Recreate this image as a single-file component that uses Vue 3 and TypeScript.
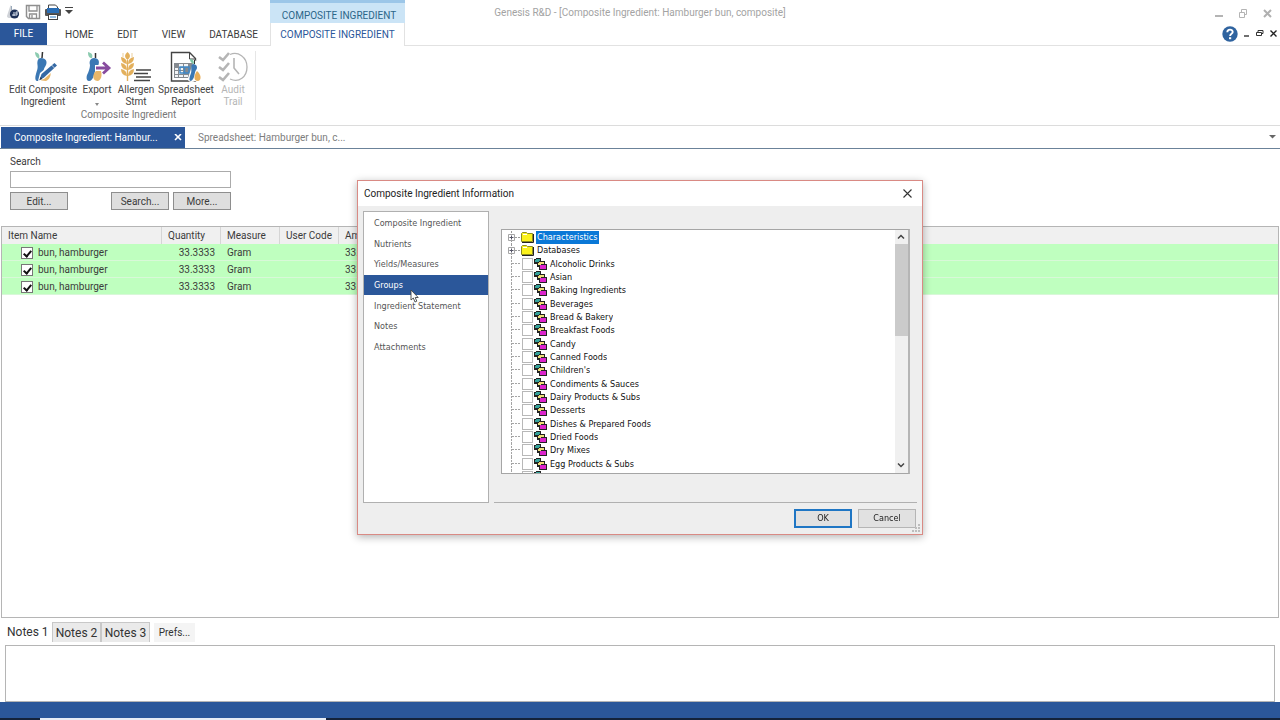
<script setup lang="ts">
import { ref } from 'vue'

interface Row { name: string; quantity: string; measure: string; amount: string; on: boolean }
interface Group { name: string; on: boolean }

const menus: string[] = ['HOME', 'EDIT', 'VIEW', 'DATABASE']
const rows = ref<Row[]>([1, 2, 3].map(() => ({
  name: 'bun, hamburger', quantity: '33.3333', measure: 'Gram', amount: '33.3333', on: true,
})))
const sections: string[] = ['Composite Ingredient', 'Nutrients', 'Yields/Measures', 'Groups', 'Ingredient Statement', 'Notes', 'Attachments']
const section = ref('Groups')
const folders: string[] = ['Characteristics', 'Databases']
const folder = ref('Characteristics')
const groups = ref<Group[]>([
  'Alcoholic Drinks', 'Asian', 'Baking Ingredients', 'Beverages', 'Bread & Bakery', 'Breakfast Foods',
  'Candy', 'Canned Foods', "Children's", 'Condiments & Sauces', 'Dairy Products & Subs', 'Desserts',
  'Dishes & Prepared Foods', 'Dried Foods', 'Dry Mixes', 'Egg Products & Subs', '',
].map((name) => ({ name, on: false })))
const search = ref('')
const notes = ref('')
</script>

<template>
  <div class="window">
    <header class="titlebar">
      <div class="title-left">
        <div class="quick">
          <svg width="14" height="16" viewBox="0 0 14 16" aria-hidden="true">
            <path d="M3.500 1 0 12q0 2 3 2h5z" fill="#d0d3d8" />
            <path d="M4.500 2v4" stroke="#9ab" stroke-width="1" />
            <circle cx="7.500" cy="10" r="4.600" fill="#1d3057" />
            <path d="M5 11h3M7 8v4M9 12V8h2M9 10h2" stroke="#dfe6f2" stroke-width="1" fill="none" />
          </svg>
          <button class="bare" aria-label="Save">
            <svg width="16" height="16" viewBox="0 0 16 16">
              <path d="M1.500 1.500h13v13h-11l-2-2z" fill="#fff" stroke="#8f8f8f" stroke-width="1.500" />
              <path d="M4 2v5h8V2" fill="none" stroke="#8f8f8f" stroke-width="1.300" />
              <path d="M4.500 14v-4h7v4M7 11v3" fill="none" stroke="#8f8f8f" stroke-width="1.300" />
            </svg>
          </button>
          <button class="bare" aria-label="Print">
            <svg width="16" height="16" viewBox="0 0 16 16">
              <path d="M3.500 5V1h7l2 2v2" fill="#fff" stroke="#444" />
              <rect x="0" y="5" width="16" height="7" rx="1" fill="#555" />
              <rect x="2" y="4" width="12" height="5" fill="#2a6db4" />
              <rect x="3.500" y="10.500" width="9" height="5" fill="#fff" stroke="#444" />
              <path d="M5 13h6" stroke="#2a7ac4" />
            </svg>
          </button>
          <button class="bare" aria-label="Customize toolbar">
            <svg width="8" height="10" viewBox="0 0 8 10"><path d="M0 .5h8" stroke="#444" /><path d="M0 3h8L4 7z" fill="#444" /></svg>
          </button>
        </div>
        <div class="context">COMPOSITE INGREDIENT</div>
      </div>
      <div class="title">Genesis R&amp;D - [Composite Ingredient: Hamburger bun, composite]</div>
      <div class="winbtns">
        <button class="bare" aria-label="Minimize"><svg width="8" height="10" viewBox="0 0 8 10"><path d="M0 7h8" stroke="#b4b4b4" stroke-width="2" /></svg></button>
        <button class="bare" aria-label="Restore"><svg width="8" height="10" viewBox="0 0 8 10"><path d="M.5 3.500h5v5h-5zM2.500 3V.5h5v5H6" fill="none" stroke="#b4b4b4" /></svg></button>
        <button class="bare" aria-label="Close"><svg width="9" height="10" viewBox="0 0 9 10"><path d="m1 1 7 7M8 1 1 8" stroke="#b0b0b0" stroke-width="2" /></svg></button>
      </div>
    </header>

    <nav class="menubar">
      <button class="file">FILE</button>
      <div class="menus"><button v-for="m in menus" :key="m" class="menu">{{ m }}</button></div>
      <button class="menu current">COMPOSITE INGREDIENT</button>
      <div class="childbtns">
        <button class="bare" aria-label="Help">
          <svg width="16" height="16" viewBox="0 0 16 16"><circle cx="8" cy="8" r="7.700" fill="#2f639f" /><path d="M5.300 6.200C5.300 2.700 10.800 2.800 10.700 6c0 1.700-2.600 1.900-2.600 3.900" fill="none" stroke="#fff" stroke-width="1.900" /><path d="M7 11.200h2.200v2H7z" fill="#fff" /></svg>
        </button>
        <button class="bare" aria-label="Minimize document"><svg width="6" height="8" viewBox="0 0 6 8"><path d="M0 6h5" stroke="#222" stroke-width="1.300" /></svg></button>
        <button class="bare" aria-label="Restore document"><svg width="8" height="8" viewBox="0 0 8 8"><path d="M.5 2.500h5v3h-5zM2 2V.5h5v3H6" fill="none" stroke="#333" /></svg></button>
        <button class="bare" aria-label="Close document"><svg width="7" height="8" viewBox="0 0 7 8"><path d="m.5.5 6 6m0-6-6 6" stroke="#222" stroke-width="1.400" /></svg></button>
      </div>
    </nav>

    <section class="ribbon">
      <div class="group">
        <div class="tools">
          <button class="tool">
            <svg width="32" height="32" viewBox="0 0 32 32">
              <path d="M8 1c4 1 5 3 4 7C9 6 8 4 8 1z" fill="#8ccbb0" /><path d="M15.500 1 15 7" stroke="#333" stroke-width="1.500" />
              <path d="M14 7c5 0 7 4 4.500 8-2 3-2 5-2.500 8-1 5-3 7-6 7-2 0-2-4-1-7 1-4 2-5 1.500-9C10 10 11 7 14 7z" fill="#3b78b4" />
              <path d="M22 17c3 4 2 11-3 13-3 0-6-1-7-2z" fill="#e9b768" />
              <path d="m11 30 2-8 14-11 4.500 4.500L17 28z" fill="#fff" /><path d="m12.500 29 2-6L27.500 12l2.500 2.500L17 26.500z" fill="#3569a4" /><path d="m12.500 29 1-3 2 2z" fill="#26364c" /><path d="m24.500 14 3 3" stroke="#fff" stroke-width=".7" />
            </svg>
            <span>Edit Composite<br>Ingredient</span>
          </button>
          <button class="tool">
            <svg width="32" height="32" viewBox="0 0 32 32">
              <path d="M7 1c4 1 5 3 4 6C8 7 7 5 7 1z" fill="#8ccbb0" /><path d="M14.500 2v5" stroke="#333" stroke-width="1.500" />
              <path d="M13 7c5 0 6 4 4 8-3 3-3 6-4 9-1 4-3 6-5 6-3 0-3-5-1-8 1-3 2-5 2-8-1-3 0-7 4-7z" fill="#3b78b4" />
              <path d="M18 17c4 4 3 12-1 13-5 0-6-5-3-9z" fill="#e9b768" />
              <path d="M14 14h8V9l9 8-9 9v-6h-8z" fill="#fff" /><path d="M15 17h13M22 11.500l6 5.500-6 5.500" fill="none" stroke="#874b9e" stroke-width="2.800" />
            </svg>
            <span>Export</span><i class="caret"></i>
          </button>
          <button class="tool">
            <svg width="32" height="32" viewBox="0 0 32 32">
              <g fill="#e3b05c"><path d="M7.500 1q5 4 0 8-5-4 0-8zM1 6q6 1 6 7-6-1-6-7zm13 0q-6 1-6 7 6-1 6-7zM1 12q6 1 6 7-6-1-6-7zm13 0q-6 1-6 7 6-1 6-7zM1 18q6 1 6 7-6-1-6-7zm13 0q-6 1-6 7 6-1 6-7z" /><path d="M6.800 9h1.400v21H6.800z" /></g>
              <path d="M3 2v4M12 2v4" stroke="#eccf9c" /><path d="M16 19h15M14 22.500h14M16 26h15M14 29.500h16" stroke="#444" stroke-width="1.300" />
            </svg>
            <span>Allergen<br>Stmt</span>
          </button>
          <button class="tool">
            <svg width="32" height="32" viewBox="0 0 32 32">
              <path d="M1.500 1.500h18l6 6V30h-24z" fill="#fff" stroke="#444" stroke-width="1.400" /><path d="M19.500 2v6h6" fill="none" stroke="#444" />
              <path d="M4 12h19v15H4z" fill="#858a90" /><path d="M9 13h4v3H9zm5 0h4v3h-4zM5 17h3v2H5zm4 0h4v2H9zM5 20h3v3H5zm4 0h4v3H9zM5 24h3v2H5zm4 0h4v2H9zm5 0h4v2h-4z" fill="#f2f4f6" />
              <path d="M10 16h9v6h-9zM14.500 16v6" fill="none" stroke="#3e88c8" stroke-width="1.400" />
              <path d="M24 9c5 1 5 5 3 7l5 7c2 6-4 9-7 7-3 2-8 1-7-3l3-9z" fill="#fff" />
              <path d="M20 8q4 0 4 5-4-1-4-5z" fill="#7cc5a5" /><path d="M24.500 9v4" stroke="#333" /><path d="M23 13c4 0 5 4 3 6-2 3-1 9-5 11-3 0-1-5 0-8 1-2-1-8 2-9z" fill="#3b78b4" /><path d="M27 20c4 3 5 9 1 10-5 0-4-6-1-10z" fill="#e9ae58" />
            </svg>
            <span>Spreadsheet<br>Report</span>
          </button>
          <button class="tool" disabled>
            <svg width="32" height="32" viewBox="0 0 32 32" fill="none" stroke="#b5b5b5">
              <path d="M13 3.500C21 0 30 6 30 16c0 10-8 16-17 12" stroke-width="1.300" /><path d="M17 7v10l5 6" stroke-width="1.600" />
              <path d="m2 6 4 3 6-7M2 16l4 3 6-7M2 26l4 3 6-7" stroke-width="2.600" />
            </svg>
            <span>Audit<br>Trail</span>
          </button>
        </div>
        <div class="group-name">Composite Ingredient</div>
      </div>
    </section>

    <div class="doctabs">
      <div class="doctab active"><span>Composite Ingredient: Hambur...</span>
        <button class="bare" aria-label="Close tab"><svg width="8" height="8" viewBox="0 0 8 8"><path d="m1 0 6 6m0-6L1 6" stroke="#fff" stroke-width="1.600" /></svg></button>
      </div>
      <button class="doctab">Spreadsheet: Hamburger bun, c...</button>
      <button class="bare more" aria-label="Tab list"><svg width="7" height="5" viewBox="0 0 7 5"><path d="M0 0h7L3.500 3.500z" fill="#666" /></svg></button>
    </div>

    <main class="work">
      <form class="search" @submit.prevent>
        <label for="search">Search</label>
        <input id="search" v-model="search" type="text">
        <div class="actions"><button type="button">Edit...</button><button type="submit" class="push">Search...</button><button type="button">More...</button></div>
      </form>

      <div class="grid">
        <table>
          <colgroup><col class="c-name"><col class="c-unit"><col class="c-unit"><col class="c-unit"><col></colgroup>
          <thead><tr><th>Item Name</th><th>Quantity</th><th>Measure</th><th>User Code</th><th>Amount</th></tr></thead>
          <tbody>
            <tr v-for="(r, i) in rows" :key="i">
              <td><label class="item"><input v-model="r.on" type="checkbox"><span>{{ r.name }}</span></label></td>
              <td class="num">{{ r.quantity }}</td><td>{{ r.measure }}</td><td></td><td>{{ r.amount }}</td>
            </tr>
          </tbody>
        </table>
      </div>

      <div class="notetabs">
        <button class="note on">Notes 1</button><button class="note">Notes 2</button><button class="note">Notes 3</button><button class="prefs">Prefs...</button>
      </div>
      <textarea v-model="notes" class="notes" aria-label="Notes 1"></textarea>
    </main>
    <footer class="status"><span></span></footer>

    <div class="overlay">
      <div class="dialog" role="dialog" aria-labelledby="dlg-title">
        <div class="dlg-head"><h2 id="dlg-title">Composite Ingredient Information</h2>
          <button class="bare" aria-label="Close dialog"><svg width="9" height="9" viewBox="0 0 9 9"><path d="m.5.5 8 8m0-8-8 8" stroke="#333" stroke-width="1.100" /></svg></button>
        </div>
        <div class="dlg-body">
          <div class="sections">
            <div class="section-list"><button v-for="s in sections" :key="s" :class="{ on: s === section }" @click="section = s">{{ s }}</button></div>
            <svg class="pointer" width="9" height="14" viewBox="0 0 9 14" aria-hidden="true"><path d="M1 1v10l2.300-2 1.700 4 1.800-.8L5.200 8.500h3z" fill="#fff" stroke="#444" stroke-width=".9" /></svg>
          </div>
          <div class="pane">
            <div class="tree">
              <div class="tree-rows">
                <button v-for="f in folders" :key="f" class="node" :class="{ on: f === folder }" @click="folder = f">
                  <svg width="34" height="13" viewBox="0 0 34 13">
                    <path d="M9.500 0v13M13 6.500h6" stroke="#9a9a9a" stroke-dasharray="2 1" />
                    <path d="M6.500 3.500h6v6h-6z" fill="#fff" stroke="#a5a5a5" /><path d="M7.500 6.500h4M9.500 4.500v4" stroke="#556" />
                    <path d="M19.500 10.500v-8l1-1h4l1 1h5v8z" fill="#fbf21c" stroke="#8d8d20" /><path d="M20 11.500h11.500V3" fill="none" stroke="#222" /><path d="M21 3.500h4" stroke="#fff" />
                  </svg><span>{{ f }}</span>
                </button>
                <label v-for="(g, i) in groups" :key="i" class="leaf">
                  <svg width="20" height="14" viewBox="0 0 20 14"><path d="M9.500 0v14M10 6.500h8" stroke="#a5a5a5" stroke-dasharray="2 1" /></svg>
                  <input v-model="g.on" type="checkbox" :aria-label="g.name || 'Group'">
                  <svg width="13" height="12" viewBox="0 0 13 12">
                    <path d="M0 1h2V0h5v6H0z" fill="#222" /><path d="M1 2h1V1h4v3H1z" fill="#35a39b" />
                    <path d="M3 4h2V3h6v6H3z" fill="#222" /><path d="M4 5h1V4h5v3H4z" fill="#eee07a" />
                    <path d="M5 7h2V6h6v6H5z" fill="#222" /><path d="M6 7h6v4H6z" fill="#dc24cc" />
                  </svg>
                  <span>{{ g.name }}</span>
                </label>
              </div>
              <div class="scroll">
                <svg width="14" height="14" viewBox="0 0 14 14"><path d="m3 8.500 3-3 3 3" fill="none" stroke="#444" stroke-width="1.500" /></svg>
                <i class="thumb"></i>
                <svg width="14" height="14" viewBox="0 0 14 14"><path d="m3 4.500 3 3 3-3" fill="none" stroke="#444" stroke-width="1.500" /></svg>
              </div>
            </div>
            <div class="dlg-actions"><button class="ok">OK</button><button>Cancel</button></div>
          </div>
        </div>
        <svg class="grip" width="8" height="8" viewBox="0 0 8 8" aria-hidden="true"><path d="M6 0h2v2H6zM3 3h2v2H3zm3 0h2v2H6zM0 6h2v2H0zm3 0h2v2H3zm3 0h2v2H6z" fill="#bdbdbd" /></svg>
      </div>
    </div>
  </div>
</template>

<style>
html, body { margin: 0; background: #fff; }
</style>

<style scoped>
.window { min-height: 100vh; display: flex; flex-direction: column; font: 10px/12px Roboto, "Open Sans", sans-serif; color: #3b3b3b; background: #fff; overflow: hidden; }
.window * { box-sizing: border-box; }
button, input, textarea { font: inherit; color: inherit; margin: 0; padding: 0; border: 0; background: none; border-radius: 0; }
svg { display: block; flex: none; }
.bare { display: flex; align-items: center; }

.titlebar { display: grid; grid-template-columns: 1fr auto 1fr; height: 23px; }
.title-left { display: flex; }
.quick { width: 270px; display: flex; align-items: center; gap: 4px; padding: 0 0 2px 7px; }
.context { width: 135px; border-top: 3px solid #9cc6e8; background: #cbe4f6; color: #2c6689; display: flex; align-items: center; justify-content: center; padding: 2px 0 0 3px; white-space: nowrap; }
.title { color: #a3a3a3; line-height: 26px; }
.winbtns { display: flex; justify-content: flex-end; align-items: center; gap: 16px; padding: 2px 8px 0 0; }

.menubar { display: flex; height: 23px; border-bottom: 1px solid #e2e2e2; }
.file { width: 47px; background: #2b579a; color: #fff; }
.menus { width: 223px; display: flex; justify-content: space-between; padding: 2px 12px 0 18px; }
.current { width: 135px; margin-bottom: -1px; padding-top: 1px; background: #fff; border: solid #e2e2e2; border-width: 0 1px; color: #2b579a; white-space: nowrap; }
.childbtns { margin-left: auto; display: flex; align-items: center; gap: 6px; padding-right: 3px; }

.ribbon { height: 80px; border-bottom: 1px solid #dcdcdc; display: flex; padding: 5px 0; }
.group { width: 256px; border-right: 1px solid #e6e6e6; padding-left: 6px; }
.tools { display: grid; grid-template-columns: 74px 34px 44px 56px 38px; }
.tool { display: flex; flex-direction: column; align-items: center; line-height: 12px; height: 57px; white-space: nowrap; color: #444; }
.tool:disabled { color: #b5b5b5; }
.tool span { margin-top: 1px; }
.caret { margin-top: 7px; border: 2px solid transparent; border-top: 3px solid #888; border-bottom: 0; }
.group-name { text-align: center; padding: 1px 4px 0 0; color: #777; }

.doctabs { height: 23px; border-bottom: 1px solid #6b8299; display: flex; padding: 1px 4px 0 1px; }
.doctab { display: flex; align-items: center; width: 184px; padding: 1px 0 0 13px; color: #7d7d7d; white-space: nowrap; }
.doctab.active { background: #2b579a; color: #fff; justify-content: space-between; padding-right: 3px; }
.more { margin-left: auto; }

.work { flex: 1; display: flex; flex-direction: column; padding: 7px 1px 0; }
.search { width: 221px; margin-left: 9px; display: flex; flex-direction: column; }
.search label { height: 15px; }
.search input { height: 17px; border: 1px solid #ababab; margin-bottom: 4px; }
.actions { display: flex; gap: 4px; }
.actions button { width: 58px; height: 18px; padding-top: 1px; border: 1px solid #8e8e8e; background: #dedede; }
.actions .push { margin-left: auto; }
.grid { flex: 1; margin-top: 16px; border: 1px solid #b5b5b5; }
table { width: 100%; border-spacing: 0; table-layout: fixed; }
.c-name { width: 160px; }
.c-unit { width: 59px; }
th { height: 17px; background: #f0f0f0; border-right: 1px solid #d5d5d5; padding: 1px 6px 0; text-align: left; font-weight: 400; white-space: nowrap; }
th:last-child { border-right: 0; }
td { height: 17px; padding: 1px 6px 0; background: #bfffbf; border-bottom: 1px solid #d8f8d8; white-space: nowrap; }
.num { text-align: right; }
.item { display: flex; align-items: center; gap: 5px; padding-left: 13px; }
.item input { appearance: none; width: 12px; height: 12px; border: 1px solid #777; background: #fff; display: grid; place-items: center; }
.item input:checked::before { content: ""; width: 3px; height: 6px; border: solid #111; border-width: 0 2px 2px 0; transform: rotate(40deg); }
.notetabs { display: flex; align-items: flex-end; height: 24px; padding-left: 5px; font-size: 12px; color: #333; }
.note { height: 20px; width: 49px; border: 1px solid #c8c8c8; border-bottom: 0; background: #eaeaea; white-space: nowrap; }
.note.on { width: 46px; border: 0; background: none; text-align: left; padding: 0 0 1px 1px; }
.prefs { font-size: 10px; height: 19px; width: 41px; margin-left: 4px; background: #f4f4f4; }
.notes { display: block; height: 57px; margin: 3px 4px 0; border: 1px solid #b5b5b5; resize: none; }
.status { height: 18px; background: #2b579a; border-bottom: 2px solid #14233b; display: flex; align-items: flex-end; }
.status span { width: 286px; height: 2px; margin: 0 0 -2px 40px; background: #e8edf5; }

.overlay { position: fixed; inset: 0; display: grid; place-items: center; padding-bottom: 6px; }
.dialog { position: relative; width: 566px; border: 1px solid #d98a84; background: #eee; box-shadow: 0 2px 8px rgba(0, 0, 0, .3); }
.dlg-head { height: 25px; background: #fff; display: flex; justify-content: space-between; align-items: center; padding: 0 10px 0 6px; color: #222; }
h2 { margin: 0; padding-top: 1px; font: inherit; }
.dlg-body { display: flex; gap: 5px; padding: 5px 5px 6px; font: 9px/12px "DejaVu Sans Condensed", "Noto Sans", sans-serif; color: #222; }
.sections { position: relative; width: 126px; height: 292px; border: 1px solid #b0b0b0; background: #fff; }
.section-list { display: grid; grid-auto-rows: 1fr; height: 145px; margin-top: 1px; }
.section-list button { text-align: left; padding-left: 10px; color: #555; }
.section-list .on { background: #2b579a; color: #fff; }
.pointer { position: absolute; left: 46px; top: 77px; }
.pane { flex: 1; display: flex; flex-direction: column; }
.tree { display: flex; margin: 18px 7px 28px 7px; height: 245px; border: 1px solid #a5a5a5; border-right: 2px solid #b5b5b5; background: #fff; overflow: hidden; }
.tree-rows { flex: 1; display: grid; grid-auto-rows: 1fr; height: 253px; margin-top: 1px; justify-items: start; color: #111; }
.node, .leaf { display: flex; align-items: center; white-space: nowrap; min-height: 0; overflow: hidden; }
.node span { padding: 0 1px; line-height: 13px; }
.node.on span { background: #0a78d7; color: #fff; }
.leaf input { appearance: none; width: 11px; height: 12px; border: 1px solid #b8b8b8; background: #fff; margin-right: 1px; }
.leaf span { padding-left: 3px; }
.scroll { width: 13px; background: #f0f0f0; display: flex; flex-direction: column; }
.thumb { height: 92px; background: #cbcbcb; margin-bottom: auto; }
.dlg-actions { border-top: 1px solid #b0b0b0; display: flex; justify-content: flex-end; gap: 6px; padding: 6px 1px 0 0; }
.dlg-actions button { width: 58px; height: 19px; border: 1px solid #b5b5b5; background: #e1e1e1; }
.dlg-actions .ok { border: 2px solid #1f76c4; }
.grip { position: absolute; right: 2px; bottom: 2px; }
</style>
